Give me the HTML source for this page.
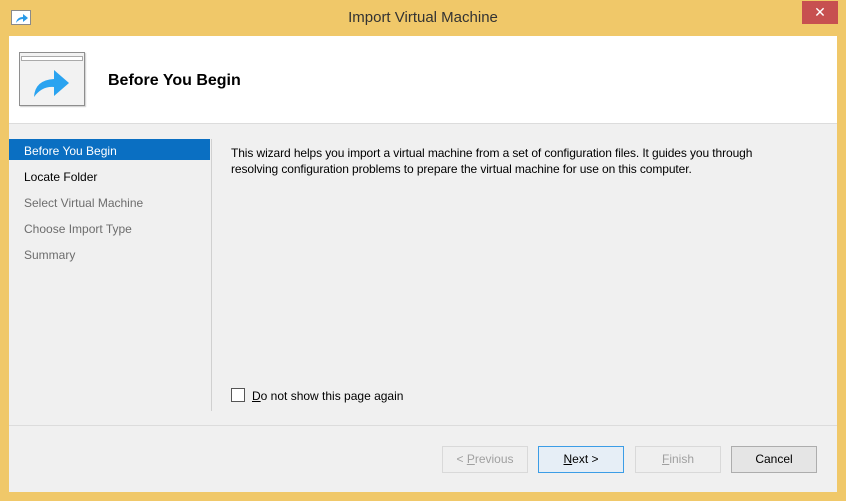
<!DOCTYPE html>
<html><head><style>
*{margin:0;padding:0;box-sizing:border-box}
body{width:846px;height:501px;background:#f0c869;font-family:"Liberation Sans",sans-serif;font-size:12px;position:relative;overflow:hidden}
.abs{position:absolute}
.title{left:0;width:846px;top:9px;text-align:center;font-size:15px;color:#333}
.close{left:802px;top:1px;width:36px;height:23px;background:#c75050;color:#fff;text-align:center;font-size:14px;line-height:23px}
.client{left:9px;top:36px;width:828px;height:456px;background:#f0f0f0}
.header{left:9px;top:36px;width:828px;height:88px;background:#fff;border-bottom:1px solid #dcdcdc}
.nav{left:24px;font-size:12px}
.btn{top:446px;width:86px;height:27px;border:1px solid #adadad;background:#e5e5e5;text-align:center;line-height:25px;font-size:12px;color:#000}
u{text-decoration:underline}
</style></head><body>
<div class="abs" style="left:11px;top:10px;width:20px;height:15px;border:1px solid #8a8a8a;background:#fff"></div>
<svg class="abs" style="left:13px;top:12px" width="16" height="12"><path d="M3 11 Q4 5 10 5 L10 2 L15 6 L10 10 L10 7 Q6 7 3 11Z" fill="#2a9be8"/></svg>
<div class="abs title">Import Virtual Machine</div>
<div class="abs close">✕</div>
<div class="abs client"></div>
<div class="abs header"></div>
<div class="abs" style="left:19px;top:52px;width:66px;height:54px;border:1px solid #8e8e8e;background:#f2f2f2;box-shadow:1px 1px 1px #ccc"></div>
<div class="abs" style="left:21px;top:56px;width:62px;height:5px;border:1px solid #aaa;background:#fff"></div>
<svg class="abs" style="left:32px;top:66px" width="40" height="34"><path d="M2 31 Q3 14 22 13 L22 4 L37 17 L22 30 L22 21 Q10 20 2 31Z" fill="#2aa3f0"/></svg>
<div class="abs" style="left:108px;top:72px;font-size:16px;font-weight:bold;color:#000">Before You Begin</div>
<div class="abs" style="left:9px;top:139px;width:201px;height:21px;background:#0a6fc2"></div>
<div class="abs nav" style="top:144px;color:#fff">Before You Begin</div>
<div class="abs nav" style="top:170px;color:#000">Locate Folder</div>
<div class="abs nav" style="top:196px;color:#6d6d6d">Select Virtual Machine</div>
<div class="abs nav" style="top:222px;color:#6d6d6d">Choose Import Type</div>
<div class="abs nav" style="top:248px;color:#6d6d6d">Summary</div>
<div class="abs" style="left:211px;top:139px;width:1px;height:272px;background:#d0d0d0"></div>
<div class="abs" style="left:231px;top:145px;width:600px;line-height:16px;color:#000;letter-spacing:-0.1px">This wizard helps you import a virtual machine from a set of configuration files. It guides you through<br>resolving configuration problems to prepare the virtual machine for use on this computer.</div>
<div class="abs" style="left:231px;top:388px;width:14px;height:14px;border:1px solid #555;background:#fff"></div>
<div class="abs" style="left:252px;top:389px;color:#000"><u>D</u>o not show this page again</div>
<div class="abs" style="left:9px;top:425px;width:828px;height:1px;background:#dcdcdc"></div>
<div class="abs btn" style="left:442px;border-color:#d9d9d9;background:#efefef;color:#a0a0a0">&lt; <u>P</u>revious</div>
<div class="abs btn" style="left:538px;border-color:#3c9de6;background:#e6eef6"><u>N</u>ext &gt;</div>
<div class="abs btn" style="left:635px;border-color:#d9d9d9;background:#efefef;color:#a0a0a0"><u>F</u>inish</div>
<div class="abs btn" style="left:731px">Cancel</div>
</body></html>
